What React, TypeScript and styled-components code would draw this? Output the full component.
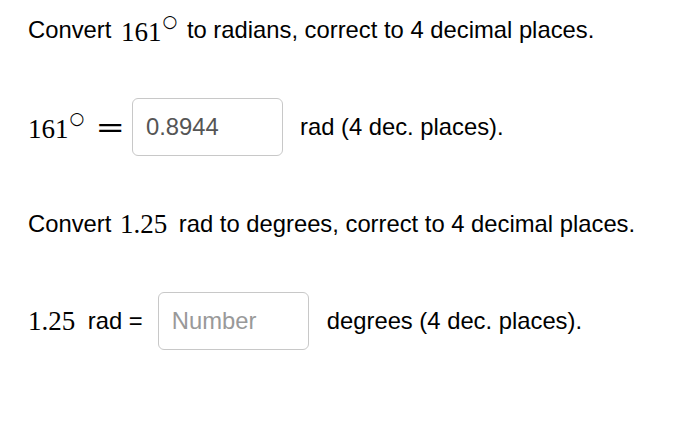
import React from "react";
import styled, { createGlobalStyle } from "styled-components";

const Global = createGlobalStyle`
  html, body { margin: 0; padding: 0; background: #fff; }
  body { font-family: "Liberation Sans", Arial, sans-serif; color: #000; }
`;

const Page = styled.div`
  display: flex;
  flex-direction: column;
  gap: 39px;
  padding: 1px 0 0 28px;
  width: 682px;
  height: 430px;
  box-sizing: border-box;
`;

const Row = styled.div`
  display: flex;
  align-items: center;
  height: 58px;
  font-size: 23.8px;
  white-space: nowrap;
`;

const Math = styled.span<{ $ml?: number; $mr?: number }>`
  font-family: "Liberation Serif", "DejaVu Serif", serif;
  font-size: 27px;
  margin: ${(p) => `0 ${p.$mr ?? 0}px 0 ${p.$ml ?? 0}px`};
`;

const Deg = styled.span`
  display: inline-block;
  font-family: "DejaVu Sans", sans-serif;
  font-size: 17px;
  line-height: 1;
  vertical-align: 14px;
  margin-left: 1px;
`;

const Eq = styled.span`
  display: inline-block;
  font-family: "DejaVu Serif", serif;
  font-size: 27px;
  margin: 0 0 0 15px;
  transform: scaleX(1.3);
`;

const Field = styled.input<{ $ml: number; $mr: number }>`
  box-sizing: border-box;
  width: 151px;
  height: 58px;
  border: 1.5px solid #c8c8c8;
  border-radius: 6px;
  padding: 0 0 0 13px;
  margin: ${(p) => `0 ${p.$mr}px 0 ${p.$ml}px`};
  font-family: "Liberation Sans", Arial, sans-serif;
  font-size: 23.8px;
  color: #555;
  background: #fff;
  outline: none;
  &::placeholder { color: #999; }
`;

export default function App() {
  return (
    <>
      <Global />
      <Page>
        <Row>
          Convert&nbsp;
          <Math $ml={3} $mr={3}>
            161<Deg>○</Deg>
          </Math>
          &nbsp;to radians, correct to 4 decimal places.
        </Row>
        <Row>
          <Math>
            161<Deg>○</Deg>
          </Math>
          <Eq>=</Eq>
          <Field $ml={10} $mr={17} defaultValue="0.8944" />
          rad (4 dec. places).
        </Row>
        <Row>
          Convert&nbsp;<Math $ml={2} $mr={5}>1.25</Math>&nbsp;rad to degrees, correct to 4 decimal places.
        </Row>
        <Row>
          <Math $mr={6}>1.25</Math>&nbsp;rad =
          <Field $ml={15} $mr={18} placeholder="Number" />
          degrees (4 dec. places).
        </Row>
      </Page>
    </>
  );
}
